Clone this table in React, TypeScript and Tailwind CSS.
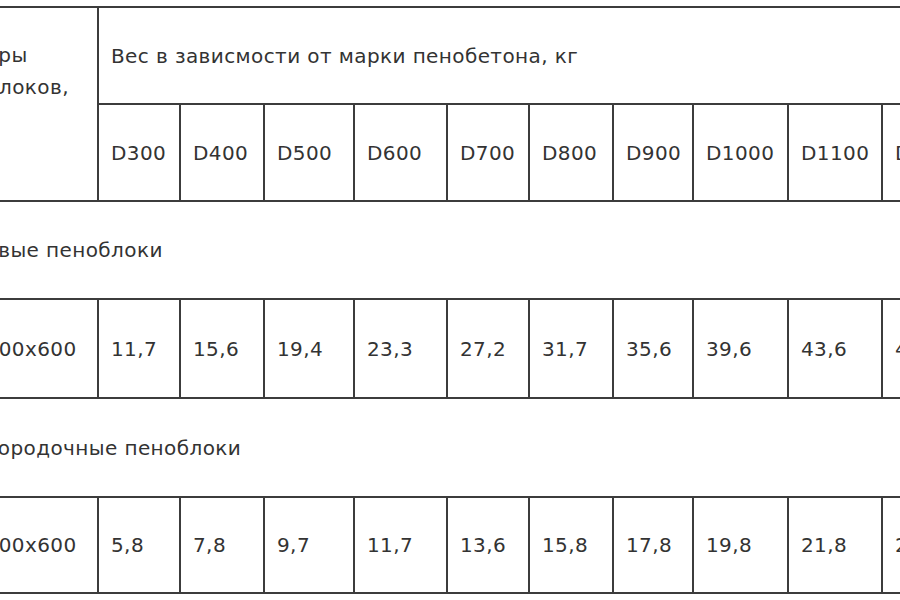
import React from 'react';

const marks = ['D300', 'D400', 'D500', 'D600', 'D700', 'D800', 'D900', 'D1000', 'D1100', 'D1200'];

const groups = [
  {
    title: 'Стеновые пеноблоки',
    size: '200x300x600',
    values: ['11,7', '15,6', '19,4', '23,3', '27,2', '31,7', '35,6', '39,6', '43,6', '47,5'],
    titleH: 'h-[98px]',
    rowH: 'h-[99px]',
  },
  {
    title: 'Перегородочные пеноблоки',
    size: '100x300x600',
    values: ['5,8', '7,8', '9,7', '11,7', '13,6', '15,8', '17,8', '19,8', '21,8', '23,8'],
    titleH: 'h-[99px]',
    rowH: 'h-[96px]',
  },
];

const colWidths = [
  'w-[177px]',
  'w-[82px]',
  'w-[84px]',
  'w-[90px]',
  'w-[93px]',
  'w-[82px]',
  'w-[84px]',
  'w-[80px]',
  'w-[95px]',
  'w-[94px]',
  'w-[93px]',
];

const cell = 'border-2 border-[#3c3c3c] pl-[12px] align-middle text-left font-normal';

export default function App() {
  return (
    <div className="w-[900px] h-[600px] overflow-hidden bg-white text-[#333] text-[20px] tracking-[0.4px] font-['DejaVu_Sans',sans-serif]">
      <table className="table-fixed border-collapse w-[1054px] -ml-[80px] mt-[6px]">
        <colgroup>
          {colWidths.map((w, i) => (
            <col key={i} className={w} />
          ))}
        </colgroup>
        <thead>
          <tr className="h-[97px]">
            <th rowSpan={2} className={`${cell} align-top pt-[31px] leading-[32px]`}>
              Размеры
              <br />
              пеноблоков,
              <br />
              мм
            </th>
            <th colSpan={10} className={cell}>
              Вес в зависмости от марки пенобетона, кг
            </th>
          </tr>
          <tr className="h-[97px]">
            {marks.map((m) => (
              <th key={m} className={cell}>
                {m}
              </th>
            ))}
          </tr>
        </thead>
        <tbody>
          {groups.map((g) => (
            <React.Fragment key={g.title}>
              <tr className={g.titleH}>
                <td colSpan={11} className="border-y-2 border-[#3c3c3c] pl-[12px] align-middle">
                  {g.title}
                </td>
              </tr>
              <tr className={g.rowH}>
                <td className={cell}>{g.size}</td>
                {g.values.map((v, i) => (
                  <td key={i} className={cell}>
                    {v}
                  </td>
                ))}
              </tr>
            </React.Fragment>
          ))}
        </tbody>
      </table>
    </div>
  );
}
